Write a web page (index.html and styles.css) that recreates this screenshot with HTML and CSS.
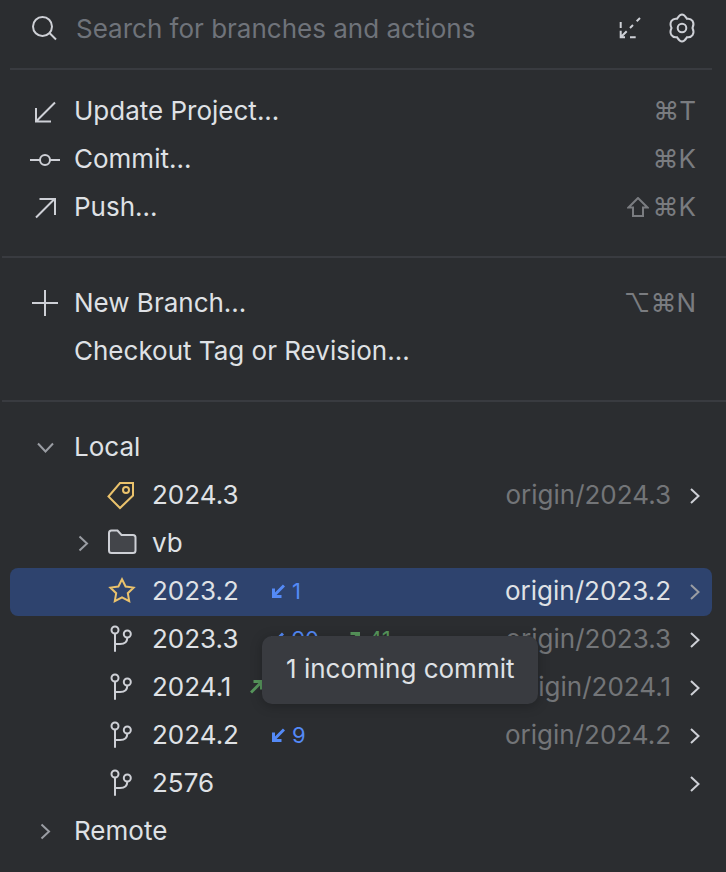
FILE: index.html
```html
<!DOCTYPE html>
<html lang="en">
<head>
    <meta charset="UTF-8">
    <meta name="viewport" content="width=device-width, initial-scale=1.0">
    <title>Git Branches</title>
    <link rel="stylesheet" href="styles.css">
</head>
<body>

    <svg class="sprites" width="0" height="0">
        <symbol id="chevronRight" viewBox="0 0 24 24"><path d="M8 5l7.500 7L8 19"/></symbol>
        <symbol id="treeOpen" viewBox="0 0 32 32"><path d="M9 11.500l7.500 8 7.500-8"/></symbol>
        <symbol id="treeClosed" viewBox="0 0 32 32"><path d="M12.500 8.500l7.500 7-7.500 7"/></symbol>
        <symbol id="branch" viewBox="0 0 32 32">
            <circle cx="10" cy="6" r="3.500"/>
            <circle cx="22.300" cy="10" r="3.500"/>
            <path d="M10 9.500V27.700M22.300 13.500Q22.300 20 15 20H10"/>
        </symbol>
        <symbol id="incoming" viewBox="0 0 14 14"><path d="M13 1.500L2.500 12M2.500 4.500v8h8"/></symbol>
        <symbol id="outgoing" viewBox="0 0 14 14"><path d="M1 12.500L11.500 2M3.500 1.500h8v8"/></symbol>
    </svg>

    <div class="searchBar">
        <svg class="icon" viewBox="0 0 32 32"><circle cx="14.500" cy="14.500" r="9.500"/><path d="M21.500 21L28 27.500"/></svg>
        <span class="placeholder">Search for branches and actions</span>
        <svg class="icon fetchIcon" viewBox="0 0 32 32"><path d="M22 6l-3.300 3.300M15 13l-3 3M8.700 19.300l-5 5M2.700 10v6M2.700 18.700v6.600H7M12 25.300h5.700"/></svg>
        <svg class="icon gearIcon" viewBox="0 0 32 32">
            <path d="M5.300 9.200C7 6.800 9 6.400 11 6.800c1-1.500 2.600-4.300 5-4.300s4 2.800 5 4.300c2-.4 4 0 5.700 2.400 1.500 2.400.8 4.600-.2 6.800 1 2.200 1.700 4.400.2 6.800-1.700 2.400-3.700 2.800-5.700 2.400-1 1.500-2.600 4.300-5 4.300s-4-2.800-5-4.300c-2 .4-4 0-5.700-2.400-1.500-2.400-.8-4.600.2-6.800-1-2.200-1.700-4.400-.2-6.800z"/>
            <circle cx="16" cy="16" r="4.300"/>
        </svg>
    </div>
    <div class="separator first"></div>

    <div class="group actions">
        <div class="row">
            <svg class="icon" viewBox="0 0 32 32"><path d="M26 6.500L7.500 25M7 12v13.500h15"/></svg>
            <span class="label">Update Project...</span>
            <span class="shortcut">⌘T</span>
        </div>
        <div class="row">
            <svg class="icon" viewBox="0 0 32 32"><circle cx="16" cy="16" r="5"/><path d="M1 16h10M21 16h10"/></svg>
            <span class="label">Commit...</span>
            <span class="shortcut">⌘K</span>
        </div>
        <div class="row">
            <svg class="icon" viewBox="0 0 32 32"><path d="M7 25.500L25.500 7M10.500 7H26v16"/></svg>
            <span class="label">Push...</span>
            <span class="shortcut"><svg class="shiftKey" viewBox="0 0 22 20"><path d="M11 1L1.500 10.500H6V19h10v-8.500h4.500z"/></svg>⌘K</span>
        </div>
    </div>
    <div class="separator"></div>

    <div class="group branchActions">
        <div class="row">
            <svg class="icon" viewBox="0 0 32 32"><path d="M16 2v26M3 15h26"/></svg>
            <span class="label">New Branch...</span>
            <span class="shortcut">⌥⌘N</span>
        </div>
        <div class="row">
            <span class="icon"></span>
            <span class="label">Checkout Tag or Revision...</span>
        </div>
    </div>
    <div class="separator"></div>

    <div class="group tree">
        <div class="row">
            <svg class="icon muted"><use href="#treeOpen"/></svg>
            <span class="label">Local</span>
        </div>

        <div class="row nested">
            <span class="icon"></span>
            <svg class="icon yellow" viewBox="0 0 32 32"><path d="M15 3h13v12.500L15 28 3.500 16.500z"/><circle cx="21" cy="10" r="3"/></svg>
            <span class="branchName">2024.3</span>
            <span class="remote">origin/2024.3</span>
            <svg class="chevron"><use href="#chevronRight"/></svg>
        </div>
        <div class="row nested">
            <svg class="icon muted"><use href="#treeClosed"/></svg>
            <svg class="icon folder" viewBox="0 0 32 32"><path d="M4 5a2.500 2.500 0 0 1 2.500-2.500h6l4 4.500H28a2.500 2.500 0 0 1 2.500 2.500V22.500A2.500 2.500 0 0 1 28 25H6.500A2.500 2.500 0 0 1 4 22.500z"/></svg>
            <span class="branchName">vb</span>
        </div>
        <div class="row nested selected">
            <span class="icon"></span>
            <svg class="icon yellow" viewBox="0 0 32 32"><path d="M17 3.200l3.600 7.300 8 1.100-5.800 5.600 1.400 7.900-7.200-3.800-7.200 3.800 1.400-7.900-5.800-5.600 8-1.100z"/></svg>
            <span class="branchName">2023.2</span>
            <span class="count incoming"><svg><use href="#incoming"/></svg>1</span>
            <span class="remote">origin/2023.2</span>
            <svg class="chevron"><use href="#chevronRight"/></svg>
        </div>
        <div class="row nested">
            <span class="icon"></span>
            <svg class="icon"><use href="#branch"/></svg>
            <span class="branchName">2023.3</span>
            <span class="count incoming"><svg><use href="#incoming"/></svg>90</span>
            <span class="count outgoing pair"><svg><use href="#outgoing"/></svg>41</span>
            <span class="remote">origin/2023.3</span>
            <svg class="chevron"><use href="#chevronRight"/></svg>
        </div>
        <div class="row nested">
            <span class="icon"></span>
            <svg class="icon"><use href="#branch"/></svg>
            <span class="branchName">2024.1</span>
            <span class="count outgoing close"><svg><use href="#outgoing"/></svg>7</span>
            <span class="remote">origin/2024.1</span>
            <svg class="chevron"><use href="#chevronRight"/></svg>
        </div>
        <div class="row nested">
            <span class="icon"></span>
            <svg class="icon"><use href="#branch"/></svg>
            <span class="branchName">2024.2</span>
            <span class="count incoming"><svg><use href="#incoming"/></svg>9</span>
            <span class="remote">origin/2024.2</span>
            <svg class="chevron"><use href="#chevronRight"/></svg>
        </div>
        <div class="row nested">
            <span class="icon"></span>
            <svg class="icon"><use href="#branch"/></svg>
            <span class="branchName">2576</span>
            <svg class="chevron pushed"><use href="#chevronRight"/></svg>
        </div>

        <div class="row">
            <svg class="icon muted"><use href="#treeClosed"/></svg>
            <span class="label">Remote</span>
        </div>
    </div>

    <div class="tooltip"><span>1 incoming commit</span></div>

</body>
</html>
```

FILE: styles.css
```css
html {
    background-color: #2b2d30;
}

body {
    margin: 0;
    position: relative;
    height: 872px;
    overflow: hidden;
    background-color: #2b2d30;
    color: #dfe1e5;
    font-family: Inter, "Liberation Sans", sans-serif;
    font-size: 26px;
}

svg {
    fill: none;
    stroke: currentColor;
    stroke-width: 2;
}

.sprites {
    position: absolute;
}

.icon {
    display: block;
    flex: none;
    width: 32px;
    height: 32px;
    color: #ced0d6;
}

.muted {
    color: #9a9da3;
}

.yellow {
    color: #eac26c;
}

/* Texto fica um pouco acima do centro da linha */
.label,
.shortcut,
.branchName,
.count,
.remote,
.tooltip span {
    margin-bottom: 3px;
}

/* Barra de busca */
.searchBar {
    display: flex;
    align-items: center;
    height: 56px;
    padding: 0 28px 12px 28px;
}

.placeholder {
    margin-left: 16px;
    flex-grow: 1;
    color: #6f737a;
}

.fetchIcon {
    margin-right: 16px;
}

.separator {
    height: 2px;
    margin-left: 2px;
    background-color: #393b40;
}

.separator.first {
    margin: 0 14px 0 10px;
}

.group {
    padding: 22px 14px 24px 10px;
}

.actions {
    padding-top: 18px;
}

.tree {
    padding-top: 22px;
}

.row {
    display: flex;
    align-items: center;
    height: 48px;
    padding: 0 5px 0 19px;
    border-radius: 8px;
    white-space: nowrap;
}

.label {
    margin-left: 13px;
}

.shortcut {
    display: flex;
    align-items: center;
    margin-left: auto;
    margin-right: 11px;
    color: #7a7c80;
    font-family: Inter, "DejaVu Sans", sans-serif;
}

.shiftKey {
    width: 22px;
    height: 20px;
    margin-right: 4px;
}

/* Lista de branches */
.nested {
    padding-left: 57px;
}

.nested .icon + .icon {
    margin-left: 6px;
}

.branchName {
    margin-left: 15px;
}

.selected {
    background-color: #2e436e;
}

.count {
    display: flex;
    align-items: center;
    margin-left: 32px;
    font-size: 22px;
}

.count svg {
    width: 14px;
    height: 14px;
    margin-right: 7px;
    stroke-width: 3;
}

.count.pair {
    margin-left: 28px;
}

.count.close {
    margin-left: 19px;
}

.incoming {
    color: #548af7;
}

.outgoing {
    color: #57965c;
}

.remote {
    margin-left: auto;
    margin-right: 12px;
    color: #737578;
}

.selected .remote {
    color: #dfe1e5;
}

.chevron {
    flex: none;
    width: 24px;
    height: 24px;
    color: #ced0d6;
}

.selected .chevron {
    color: #9a9da3;
}

.chevron.pushed {
    margin-left: auto;
}

.folder {
    fill: #43454a;
}

.tooltip {
    position: absolute;
    top: 636px;
    left: 262px;
    height: 68px;
    padding: 0 24px;
    display: flex;
    align-items: center;
    box-sizing: border-box;
    width: 276px;
    background-color: #393b40;
    border-radius: 10px;
    box-shadow: 0 2px 12px rgba(0, 0, 0, 0.25);
    color: #dfe1e5;
    white-space: nowrap;
}
```
